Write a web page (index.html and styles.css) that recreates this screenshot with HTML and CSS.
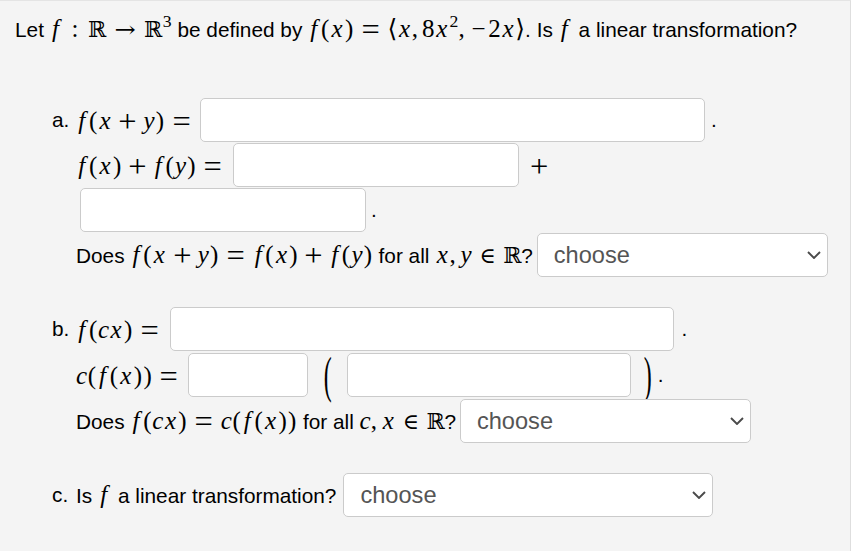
FILE: index.html
```html
<!DOCTYPE html>
<html>
<head>
<meta charset="utf-8">
<title>Linear transformation</title>
<link rel="stylesheet" href="styles.css">
</head>
<body>
<div class="problem">
  <p class="stmt">Let <span class="m"><span class="v vf">f</span><span class="rel">:</span><span class="bb">ℝ</span><span class="rel arr"><span class="arrg">→</span></span><span class="bb">ℝ</span><span class="sup">3</span></span> be defined by <span class="m"><span class="v vf">f</span><span class="p">(</span><span class="v vx">x</span><span class="p">)</span><span class="rel op">=</span><span class="ang">⟨</span><span class="v vx">x</span><span class="pun">,</span><span class="n">8</span><span class="v vx">x</span><span class="sup">2</span><span class="pun">,</span><span class="neg">−</span><span class="n">2</span><span class="v vx">x</span><span class="ang">⟩</span></span>. Is <span class="m"><span class="v vf vfi">f</span></span> a linear transformation?</p>

  <div class="part pa">
    <div class="label">a.</div>
    <div class="content">
      <div class="line">
        <span class="m"><span class="v vf">f</span><span class="p">(</span><span class="v vx">x</span><span class="bin op">+</span><span class="v vy">y</span><span class="p">)</span><span class="rel op">=</span></span>
        <input class="ans w505 ml2" type="text">
        <span class="dot ml6">.</span>
      </div>
      <div class="line">
        <span class="m"><span class="v vf">f</span><span class="p">(</span><span class="v vx">x</span><span class="p">)</span><span class="bin op">+</span><span class="v vf">f</span><span class="p">(</span><span class="v vy">y</span><span class="p">)</span><span class="rel op">=</span></span>
        <input class="ans w286 ml3" type="text">
        <span class="m plus"><span class="op">+</span></span>
      </div>
      <div class="line">
        <input class="ans w286 ml4" type="text">
        <span class="dot ml5">.</span>
      </div>
      <div class="line">
        <span class="txt">Does <span class="m"><span class="v vf">f</span><span class="p">(</span><span class="v vx">x</span><span class="bin op">+</span><span class="v vy">y</span><span class="p">)</span><span class="rel op">=</span><span class="v vf">f</span><span class="p">(</span><span class="v vx">x</span><span class="p">)</span><span class="bin op">+</span><span class="v vf">f</span><span class="p">(</span><span class="v vy">y</span><span class="p">)</span></span> for all <span class="m"><span class="v vx">x</span><span class="pun">,</span><span class="v vy">y</span><span class="elem">∈</span><span class="bb">ℝ</span></span>?</span>
        <span class="selw s290 ml4"><select class="sel"><option>choose</option><option>yes</option><option>no</option></select><svg class="chev" width="14" height="8" viewBox="0 0 14 8"><path d="M1 1 L7 7 L13 1" fill="none" stroke="#4a4a4a" stroke-width="1.9"/></svg></span>
      </div>
    </div>
  </div>

  <div class="part pb">
    <div class="label">b.</div>
    <div class="content">
      <div class="line">
        <span class="m"><span class="v vf">f</span><span class="p">(</span><span class="v vc">c</span><span class="v vx">x</span><span class="p">)</span><span class="rel op">=</span></span>
        <input class="ans w504 ml4" type="text">
        <span class="dot ml7">.</span>
      </div>
      <div class="line tall">
        <span class="m"><span class="v vc">c</span><span class="p">(</span><span class="v vf">f</span><span class="p">(</span><span class="v vx">x</span><span class="p">)</span><span class="p">)</span><span class="rel op">=</span></span>
        <input class="ans w120 ml2" type="text">
        <span class="bigp ml16">(</span>
        <input class="ans w284 ml15" type="text">
        <span class="bigp ml13">)</span>
        <span class="dot ml6">.</span>
      </div>
      <div class="line">
        <span class="txt">Does <span class="m"><span class="v vf">f</span><span class="p">(</span><span class="v vc">c</span><span class="v vx">x</span><span class="p">)</span><span class="rel op">=</span><span class="v vc">c</span><span class="p">(</span><span class="v vf">f</span><span class="p">(</span><span class="v vx">x</span><span class="p">)</span><span class="p">)</span></span> for all <span class="m"><span class="v vc">c</span><span class="pun">,</span><span class="v vx">x</span><span class="elem">∈</span><span class="bb">ℝ</span></span>?</span>
        <span class="selw s290 ml4"><select class="sel"><option>choose</option><option>yes</option><option>no</option></select><svg class="chev" width="14" height="8" viewBox="0 0 14 8"><path d="M1 1 L7 7 L13 1" fill="none" stroke="#4a4a4a" stroke-width="1.9"/></svg></span>
      </div>
    </div>
  </div>

  <div class="part pc">
    <div class="label">c.</div>
    <div class="content">
      <div class="line">
        <span class="txt">Is <span class="m"><span class="v vf vfi">f</span></span> a linear transformation?</span>
        <span class="selw s370 ml7"><select class="sel"><option>choose</option><option>yes</option><option>no</option></select><svg class="chev" width="14" height="8" viewBox="0 0 14 8"><path d="M1 1 L7 7 L13 1" fill="none" stroke="#4a4a4a" stroke-width="1.9"/></svg></span>
      </div>
    </div>
  </div>
</div>
</body>
</html>
```

FILE: styles.css
```css
html, body {
  margin: 0;
  padding: 0;
  background: #ffffff;
}

body {
  font-family: "Liberation Sans", Arial, sans-serif;
  font-size: 20.8px;
  color: #000;
}

.problem {
  width: 850px;
  min-height: 550px;
  background: #f4f4f4;
  border-top: 1px solid #e4e4e4;
  border-right: 1px solid #dedede;
}

.stmt {
  margin: 0;
  padding: 14px 0 0 15px;
  line-height: 30px;
  white-space: nowrap;
}

/* ---------- math ---------- */
.m {
  font-family: "Liberation Serif", "DejaVu Serif", serif;
  font-size: 25px;
  line-height: 1;
  white-space: nowrap;
}

.v { font-style: italic; }
.vf { padding: 0 .12em 0 .09em; }
.vfi { padding-right: .2em; }
.vx { padding: 0 .064em; }
.vy { padding: 0 .023em; }
.vc { padding: 0; }
.p { padding: 0 .028em; }
.n { font-style: normal; }

.bin { display: inline-block; padding: 0 .33em; }
.rel { display: inline-block; padding: 0 .385em; }
.op { display: inline-block; transform: scale(1.3); }

.arr {
  width: 1em;
  padding: 0 .26em;
  text-align: center;
}

.arrg {
  display: inline-block;
  font-family: "DejaVu Serif", "DejaVu Sans", serif;
  font-size: 22px;
  transform: scaleX(1.15);
}

.neg { padding: 0 .107em; }
.pun { padding-right: .167em; }

.bb {
  display: inline-block;
  font-family: "DejaVu Serif", "DejaVu Sans", serif;
  font-style: normal;
  font-size: 22px;
  width: 18px;
  text-align: center;
}

.elem {
  display: inline-block;
  font-family: "DejaVu Serif", "DejaVu Sans", serif;
  font-size: 22px;
  width: 17px;
  padding: 0 7px;
  text-align: center;
}

.ang {
  display: inline-block;
  font-family: "DejaVu Sans", "DejaVu Serif", serif;
  font-size: 25px;
  width: 10px;
  text-align: center;
}

.sup {
  font-size: .707em;
  vertical-align: .58em;
  line-height: 0;
  padding-left: .04em;
  font-style: normal;
}

.plus {
  margin-left: 11px;
  display: inline-block;
  width: 19px;
  text-align: center;
}

.bigp {
  display: inline-block;
  font-family: "Liberation Serif", serif;
  font-size: 24px;
  line-height: 1;
  width: 8px;
  text-align: center;
  transform: scaleY(2.15);
}

/* ---------- parts ---------- */
.part {
  display: flex;
  padding-left: 52px;
}

.pa { margin-top: 53px; }
.pb { margin-top: 30px; }
.pc { margin-top: 30px; }

.label {
  flex: none;
  width: 24px;
  height: 44px;
  line-height: 44px;
}

.content {
  display: flex;
  flex-direction: column;
  gap: 1px;
}

.line {
  display: flex;
  align-items: center;
  height: 44px;
  white-space: nowrap;
}

.line.tall { height: 46px; }

.txt { white-space: nowrap; }

.dot { display: inline-block; }

/* ---------- inputs ---------- */
.ans {
  flex: none;
  box-sizing: border-box;
  height: 44px;
  margin: 0;
  padding: 0 8px;
  border: 1px solid #cbcbcb;
  border-radius: 5px;
  background: #fff;
  font: inherit;
  outline: none;
}

.w505 { width: 505px; }
.w504 { width: 504px; }
.w286 { width: 286px; }
.w284 { width: 284px; }
.w120 { width: 120px; }

.selw {
  position: relative;
  display: inline-block;
  flex: none;
  height: 44px;
}

.s290 { width: 291px; }
.s370 { width: 370px; }

.sel {
  -webkit-appearance: none;
  appearance: none;
  box-sizing: border-box;
  width: 100%;
  height: 44px;
  margin: 0;
  padding: 0 30px 0 16px;
  border: 1px solid #cbcbcb;
  border-radius: 5px;
  background: #fff;
  font-family: "Liberation Sans", Arial, sans-serif;
  font-size: 23.6px;
  color: #555;
  outline: none;
}

.chev {
  position: absolute;
  right: 7px;
  top: 18px;
  pointer-events: none;
}

/* ---------- spacing helpers ---------- */
.ml2 { margin-left: 2px; }
.ml3 { margin-left: 3px; }
.ml4 { margin-left: 4px; }
.ml5 { margin-left: 5px; }
.ml6 { margin-left: 6px; }
.ml7 { margin-left: 7px; }
.ml13 { margin-left: 13px; }
.ml15 { margin-left: 15px; }
.ml16 { margin-left: 16px; }
```
